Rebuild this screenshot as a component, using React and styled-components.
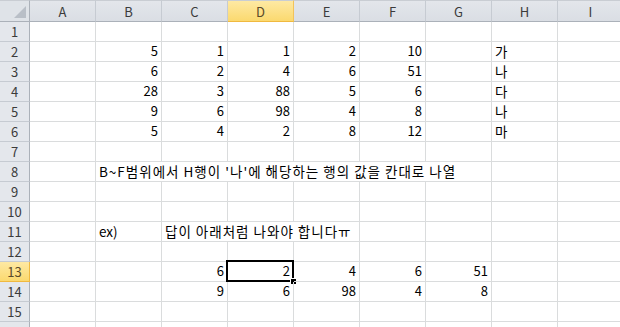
import React from "react";
import styled, { createGlobalStyle, css } from "styled-components";

const Global = createGlobalStyle`
  html, body { margin: 0; padding: 0; background: #ffffff; overflow: hidden; }
  body { width: 620px; height: 327px; }
`;

const FONT = `"Noto Sans CJK KR", "Noto Sans", sans-serif`;

const Sheet = styled.div`
  display: grid;
  grid-template-columns: 30px repeat(9, 66px);
  grid-template-rows: 22px;
  grid-auto-rows: 20px;
  width: 620px;
  height: 327px;
  overflow: hidden;
  font-family: ${FONT};
  font-size: 13px;
  color: #000;
`;

const Corner = styled.div`
  position: relative;
  box-sizing: border-box;
  background: #dfe3e8;
  border-top: 1px solid #c9cdd3;
  border-right: 1px solid #abb1b9;
  border-bottom: 1px solid #abb1b9;
  &::after {
    content: "";
    position: absolute;
    right: 3px;
    bottom: 3px;
    width: 0;
    height: 0;
    border-left: 12px solid transparent;
    border-bottom: 12px solid #b9bfc7;
  }
`;

const ColHead = styled.div`
  box-sizing: border-box;
  display: flex;
  align-items: center;
  justify-content: center;
  border-top: 1px solid #c9cdd3;
  border-right: 1px solid #c6cbd2;
  border-bottom: 1px solid #abb1b9;
  background: linear-gradient(#e3e6eb, #dadee4);
  color: #3b3b3b;
  font-size: 13px;
  ${(p) =>
    p.$active &&
    css`
      background: linear-gradient(#fee9a3, #fbd96f);
      border-right-color: #f2c35a;
      border-bottom-color: #f0b93f;
      color: #5a4a2a;
    `}
`;

const RowHead = styled.div`
  box-sizing: border-box;
  display: flex;
  align-items: center;
  justify-content: center;
  border-right: 1px solid #abb1b9;
  border-bottom: 1px solid #c6cbd2;
  background: #e4e7ec;
  color: #3b3b3b;
  font-size: 13px;
  ${(p) =>
    p.$active &&
    css`
      background: linear-gradient(#fee9a3, #fbd96f);
      border-bottom-color: #f0b93f;
      border-right-color: #f0b93f;
      color: #5a4a2a;
    `}
`;

const Cell = styled.div`
  position: relative;
  box-sizing: border-box;
  display: flex;
  align-items: flex-end;
  justify-content: ${(p) => (p.$num ? "flex-end" : "flex-start")};
  padding: 0 3px 1px 3px;
  grid-column: span ${(p) => p.$span || 1};
  border-right: 1px solid #dadcdd;
  border-bottom: 1px solid #dadcdd;
  white-space: nowrap;
  line-height: 18px;
  ${(p) =>
    !p.$num &&
    css`
      font-size: 13.5px;
    `}
  ${(p) =>
    p.$wide &&
    css`
      letter-spacing: 1px;
    `}
  ${(p) =>
    p.$selected &&
    css`
      &::before {
        content: "";
        position: absolute;
        left: -2px;
        top: -2px;
        right: -1px;
        bottom: -1px;
        border: 2px solid #000;
        pointer-events: none;
      }
      &::after {
        content: "";
        position: absolute;
        right: -3px;
        bottom: -3px;
        width: 5px;
        height: 5px;
        background: #000;
        border: 1px solid #fff;
        border-right: none;
        border-bottom: none;
      }
    `}
`;

const COLS = ["A", "B", "C", "D", "E", "F", "G", "H", "I"];
const ACTIVE_COL = "D";
const ACTIVE_ROW = 13;
const VISIBLE_ROWS = 15;

const n = (v) => ({ v, num: true });
const t = (v, span) => ({ v, span, wide: true });
const s = (v) => ({ v });

const DATA = {
  2: { B: n(5), C: n(1), D: n(1), E: n(2), F: n(10), H: t("가") },
  3: { B: n(6), C: n(2), D: n(4), E: n(6), F: n(51), H: t("나") },
  4: { B: n(28), C: n(3), D: n(88), E: n(5), F: n(6), H: t("다") },
  5: { B: n(9), C: n(6), D: n(98), E: n(4), F: n(8), H: t("나") },
  6: { B: n(5), C: n(4), D: n(2), E: n(8), F: n(12), H: t("마") },
  8: { B: t("B~F범위에서 H행이 '나'에 해당하는 행의 값을 칸대로 나열", 6) },
  11: { B: s("ex)"), C: t("답이 아래처럼 나와야 합니다ㅠ", 3) },
  13: { C: n(6), D: n(2), E: n(4), F: n(6), G: n(51) },
  14: { C: n(9), D: n(6), E: n(98), F: n(4), G: n(8) },
};

function Row({ r }) {
  const rowData = DATA[r] || {};
  const cells = [];
  let i = 0;
  while (i < COLS.length) {
    const c = COLS[i];
    const d = rowData[c];
    const span = d && d.span ? d.span : 1;
    cells.push(
      <Cell
        key={c}
        $num={!d || d.num}
        $wide={d && d.wide}
        $span={span}
        $selected={r === ACTIVE_ROW && c === ACTIVE_COL}
      >
        {d ? d.v : null}
      </Cell>
    );
    i += span;
  }
  return (
    <>
      <RowHead $active={r === ACTIVE_ROW}>{r <= VISIBLE_ROWS ? r : null}</RowHead>
      {cells}
    </>
  );
}

export default function App() {
  const rows = Array.from({ length: 16 }, (_, k) => k + 1);
  return (
    <>
      <Global />
      <Sheet>
        <Corner />
        {COLS.map((c) => (
          <ColHead key={c} $active={c === ACTIVE_COL}>
            {c}
          </ColHead>
        ))}
        {rows.map((r) => (
          <Row key={r} r={r} />
        ))}
      </Sheet>
    </>
  );
}
